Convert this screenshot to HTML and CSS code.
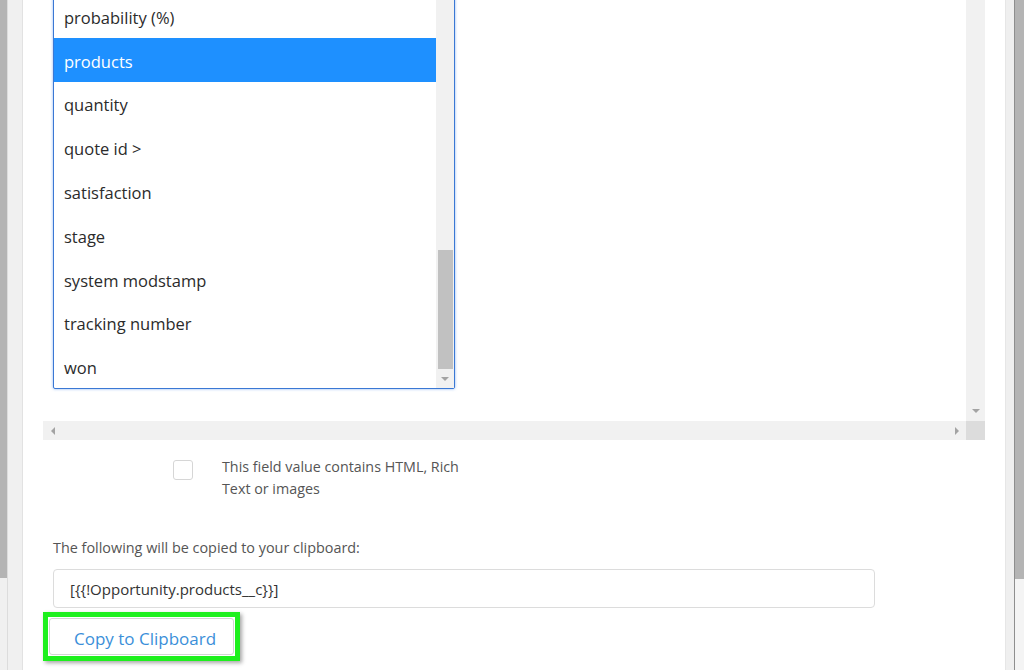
FILE: index.html
```html
<!DOCTYPE html>
<html lang="en">
<head>
<meta charset="utf-8">
<title>Insert field</title>
<link rel="stylesheet" href="styles.css">
</head>
<body>
<div class="edge edge-left"></div>
<div class="frame frame-left"></div>
<main class="dialog">
  <div class="scroller">
    <div class="scroll-main">
      <div class="scroll-content">
        <div class="listbox">
          <ul class="options">
            <li class="option">probability (%)</li>
            <li class="option selected">products</li>
            <li class="option">quantity</li>
            <li class="option">quote id &gt;</li>
            <li class="option">satisfaction</li>
            <li class="option">stage</li>
            <li class="option">system modstamp</li>
            <li class="option">tracking number</li>
            <li class="option">won</li>
          </ul>
          <div class="list-bar">
            <div class="bar-space"></div>
            <div class="list-thumb"></div>
            <div class="bar-btn"><span class="arrow-down"></span></div>
          </div>
        </div>
      </div>
      <div class="vbar">
        <div class="bar-space"></div>
        <div class="bar-btn"><span class="arrow-down"></span></div>
      </div>
    </div>
    <div class="hbar">
      <div class="hbar-btn"><span class="arrow-left"></span></div>
      <div class="bar-space"></div>
      <div class="hbar-btn"><span class="arrow-right"></span></div>
      <div class="corner"></div>
    </div>
  </div>

  <div class="html-row">
    <span class="checkbox"></span>
    <span class="html-text">This field value contains HTML, Rich Text or images</span>
  </div>

  <div class="copy-form">
    <p class="copy-label">The following will be copied to your clipboard:</p>
    <div class="copy-field">[{{!Opportunity.products__c}}]</div>
    <div class="highlight">
      <button class="copy-btn" type="button">Copy to Clipboard</button>
    </div>
  </div>
</main>
<div class="frame frame-right"></div>
<div class="edge edge-right"></div>
</body>
</html>
```
FILE: styles.css
```css
* { box-sizing: border-box; }
html, body { margin: 0; padding: 0; }
body {
  width: 1024px;
  height: 670px;
  overflow: hidden;
  display: flex;
  font-family: "Open Sans", "Liberation Sans", sans-serif;
  background: #f0f0f0;
}
.edge-left {
  width: 8px;
  background: linear-gradient(to bottom, #b4b4b4 0, #b4b4b4 578px, #f0f0f0 578px);
  border-right: 1px solid #dcdcdc;
}
.frame-left {
  width: 15px;
  background: #f0f0f0;
  border-right: 1px solid #e2e2e2;
}
.dialog {
  width: 982px;
  background: #fff;
  padding: 0 20px;
}
.frame-right {
  width: 9px;
  background: #efefef;
  border-left: 1px solid #e6e6e6;
}
.edge-right {
  width: 10px;
  background: linear-gradient(to bottom, #b4b4b4 0, #b4b4b4 579px, #f4f4f4 579px);
  border-left: 1px solid #8e8e8e;
}

/* scroll area */
.scroller { width: 942px; }
.scroll-main { display: flex; height: 421px; }
.scroll-content { flex: 1; padding-left: 10px; }
.vbar, .list-bar {
  display: flex;
  flex-direction: column;
  background: #f1f1f1;
}
.vbar { width: 19px; }
.bar-space { flex: 1; }
.bar-btn {
  height: 21px;
  display: flex;
  align-items: center;
  justify-content: center;
}
.arrow-down {
  width: 0; height: 0;
  border-left: 4px solid transparent;
  border-right: 4px solid transparent;
  border-top: 4px solid #a3a3a3;
}
.arrow-left, .arrow-right {
  width: 0; height: 0;
  border-top: 4px solid transparent;
  border-bottom: 4px solid transparent;
}
.arrow-left { border-right: 4px solid #a3a3a3; }
.arrow-right { border-left: 4px solid #a3a3a3; }
.hbar {
  display: flex;
  height: 19px;
  background: #f1f1f1;
}
.hbar-btn {
  width: 19px;
  display: flex;
  align-items: center;
  justify-content: center;
}
.corner { width: 19px; background: #dcdcdc; }

/* listbox */
.listbox {
  width: 402px;
  margin-top: -7px;
  display: flex;
  border: 1px solid #3a78d4;
  border-radius: 2px;
  box-shadow: 0 0 3px rgba(60, 130, 230, 0.6);
  background: #fff;
}
.options {
  flex: 1;
  list-style: none;
  margin: 0;
  padding: 0;
}
.option {
  height: 43.8px;
  display: flex;
  align-items: center;
  padding: 3px 0 0 10px;
  font-size: 16.5px;
  color: #2b2b2b;
}
.option.selected { background: #1e90ff; color: #fff; }
.list-bar { width: 18px; }
.list-bar .bar-btn { height: 19px; }
.list-thumb {
  height: 119px;
  margin: 0 1px 0 2px;
  background: #c1c1c1;
}

/* html checkbox row */
.html-row {
  display: flex;
  align-items: flex-start;
  gap: 29px;
  margin-top: 16px;
  padding-left: 130px;
}
.checkbox {
  width: 20px;
  height: 20px;
  margin-top: 4px;
  border: 1px solid #d6d6d6;
  border-radius: 3px;
  background: #fff;
}
.html-text {
  width: 265px;
  font-size: 14.3px;
  line-height: 22px;
  color: #555;
}

/* copy form */
.copy-form { padding-left: 10px; }
.copy-label {
  margin: 38px 0 0;
  font-size: 14.4px;
  line-height: 20px;
  color: #555;
}
.copy-field {
  width: 822px;
  height: 39px;
  margin-top: 11px;
  padding-left: 16px;
  display: flex;
  align-items: center;
  border: 1px solid #dcdcdc;
  border-radius: 4px;
  font-size: 15px;
  color: #333;
}
.highlight {
  display: inline-block;
  margin: 4px 0 0 -10px;
  border: 5px solid #1ef01e;
  padding: 1px;
  box-shadow: 2px 2px 4px rgba(0, 0, 0, 0.35);
}
.copy-btn {
  display: block;
  width: 185px;
  height: 37px;
  padding: 3px 0 0 24px;
  text-align: left;
  border: 1px solid #d4d4d4;
  border-radius: 3px;
  background: #fff;
  font-family: "Open Sans", "Liberation Sans", sans-serif;
  font-size: 17px;
  color: #3b8fd9;
}
```
